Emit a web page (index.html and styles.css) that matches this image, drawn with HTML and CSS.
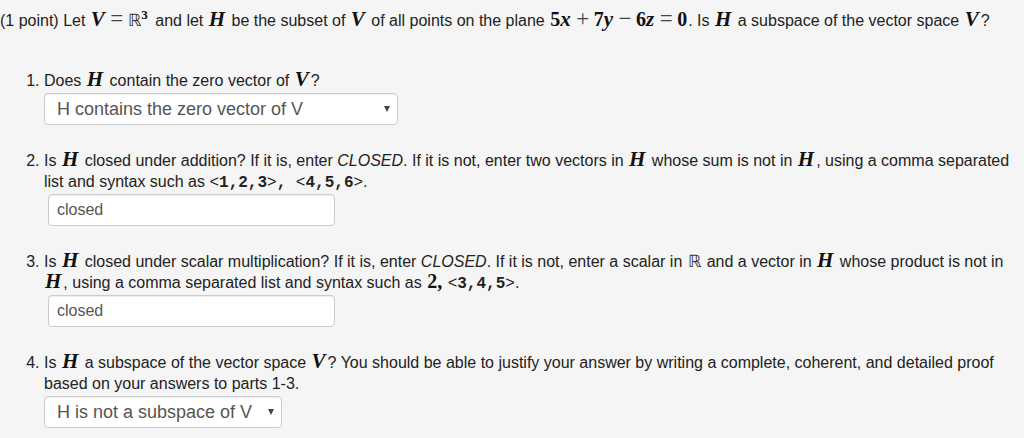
FILE: index.html
```html
<!DOCTYPE html>
<html lang="en">
<head>
<meta charset="utf-8">
<title>Subspace problem</title>
<link rel="stylesheet" href="styles.css">
</head>
<body>
<div class="problem">
  <p class="intro">(1 point) Let <span class="m"><i>V</i><span class="op">=</span><span class="bb">ℝ</span><sup>3</sup></span> and let <span class="m"><i>H</i></span> be the subset of <span class="m"><i>V</i></span> of all points on the plane <span class="m"><b>5</b><i>x</i><span class="op">+</span><b>7</b><i>y</i><span class="op">−</span><b>6</b><i>z</i><span class="op">=</span><b>0</b></span>. Is <span class="m"><i>H</i></span> a subspace of the vector space <span class="m"><i>V</i></span>?</p>
  <ol class="parts">
    <li class="part">
      <p class="q">Does <span class="m"><i>H</i></span> contain the zero vector of <span class="m"><i>V</i></span>?</p>
      <span class="select-wrap">
        <select class="select">
          <option>?</option>
          <option selected>H contains the zero vector of V</option>
          <option>H does not contain the zero vector of V</option>
        </select>
      </span>
    </li>
    <li class="part">
      <p class="q">Is <span class="m"><i>H</i></span> closed under addition? If it is, enter <em>CLOSED</em>. If it is not, enter two vectors in <span class="m"><i>H</i></span> whose sum is not in <span class="m"><i>H</i></span>, using a comma separated list and syntax such as <span class="code">&lt;<b>1,2,3</b>&gt;<b>,</b> &lt;<b>4,5,6</b>&gt;</span>.</p>
      <input class="field" type="text" value="closed">
    </li>
    <li class="part">
      <p class="q">Is <span class="m"><i>H</i></span> closed under scalar multiplication? If it is, enter <em>CLOSED</em>. If it is not, enter a scalar in <span class="m"><span class="bb">ℝ</span></span> and a vector in <span class="m"><i>H</i></span> whose product is not in <span class="m"><i>H</i></span>, using a comma separated list and syntax such as <span class="m"><b>2,</b></span> <span class="code">&lt;<b>3,4,5</b>&gt;</span>.</p>
      <input class="field" type="text" value="closed">
    </li>
    <li class="part">
      <p class="q">Is <span class="m"><i>H</i></span> a subspace of the vector space <span class="m"><i>V</i></span>? You should be able to justify your answer by writing a complete, coherent, and detailed proof based on your answers to parts 1-3.</p>
      <span class="select-wrap">
        <select class="select">
          <option>?</option>
          <option>H is a subspace of V</option>
          <option selected>H is not a subspace of V</option>
        </select>
      </span>
    </li>
  </ol>
</div>
</body>
</html>
```

FILE: styles.css
```css
html, body {
  margin: 0;
  padding: 0;
  background: #f5f5f5;
}

body {
  font-family: "Liberation Sans", Arial, sans-serif;
  font-size: 16px;
  line-height: 21px;
  color: #222;
}

.problem {
  padding: 10px 2px 0 0;
}

.intro {
  margin: 0 0 39px;
}

.m {
  font-family: "Liberation Serif", "DejaVu Serif", serif;
  font-size: 20px;
  line-height: 0;
  color: #111;
  padding: 0 1px;
}

.m i {
  font-size: 21px;
  font-style: italic;
  font-weight: 700;
  padding-right: 1px;
}

.m b {
  font-weight: 700;
}

.m .op {
  font-size: 23px;
  font-weight: 400;
  color: #444;
  margin: 0 4.5px;
}

.m .bb {
  font-family: "DejaVu Sans", sans-serif;
  font-size: 17px;
  color: #333;
}

.m sup {
  font-size: 13px;
  font-weight: 700;
  line-height: 0;
  vertical-align: 7px;
  padding-right: 2px;
}

.code {
  font-family: "Liberation Mono", "DejaVu Sans Mono", monospace;
  font-size: 16px;
  line-height: 0;
}

.code b {
  font-weight: 700;
}

.parts {
  margin: 0;
  padding: 0 0 0 44px;
}

.part {
  margin: 0 0 25px;
}

.q {
  margin: 0 0 2px;
}

.select-wrap {
  position: relative;
  display: inline-block;
  vertical-align: top;
}

.select-wrap::after {
  content: "";
  position: absolute;
  right: 8px;
  top: 13px;
  border-left: 3.5px solid transparent;
  border-right: 3.5px solid transparent;
  border-top: 6px solid #444;
  pointer-events: none;
}

.select {
  -webkit-appearance: none;
  appearance: none;
  box-sizing: border-box;
  height: 32px;
  margin: 0;
  padding: 0 28px 0 12px;
  font-family: "Liberation Sans", Arial, sans-serif;
  font-size: 18px;
  color: #555;
  background: #fff;
  border: 1px solid #ccc;
  border-radius: 4px;
  box-shadow: inset 0 1px 1px rgba(0, 0, 0, 0.075);
}

.field {
  display: block;
  box-sizing: border-box;
  width: 287px;
  height: 32px;
  margin: 0 0 0 4px;
  padding: 0 8px;
  font-family: "Liberation Sans", Arial, sans-serif;
  font-size: 16px;
  color: #555;
  background: #fff;
  border: 1px solid #ccc;
  border-radius: 4px;
  box-shadow: inset 0 1px 1px rgba(0, 0, 0, 0.075);
}
```
